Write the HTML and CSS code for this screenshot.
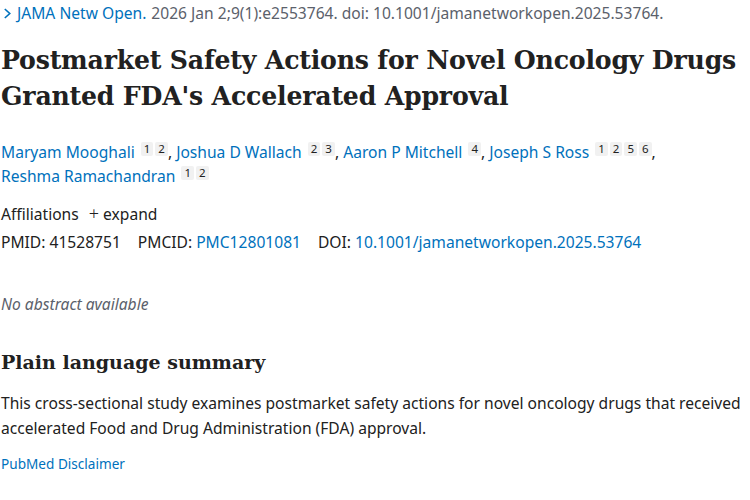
FILE: index.html
```html
<!DOCTYPE html>
<html lang="en">
<head>
<meta charset="utf-8">
<title>Postmarket Safety Actions</title>
<link rel="stylesheet" href="styles.css">
</head>
<body>
<main class="article">
  <div class="citation">
    <svg class="chev" viewBox="0 0 10 14" width="9" height="13"><path d="M2 2 L7.5 7 L2 12" fill="none" stroke="#0071bc" stroke-width="1.8"/></svg>
    <a class="link" href="#">JAMA Netw Open.</a>
    <span class="cit-rest">2026 Jan 2;9(1):e2553764. doi: 10.1001/jamanetworkopen.2025.53764.</span>
  </div>
  <h1 class="title">Postmarket Safety Actions for Novel Oncology Drugs Granted FDA's Accelerated Approval</h1>
  <div class="authors">
    <span class="author"><a class="link" href="#">Maryam Mooghali</a> <sup class="aff"><span>1</span><span>2</span></sup>,</span>
    <span class="author"><a class="link" href="#">Joshua D Wallach</a> <sup class="aff"><span>2</span><span>3</span></sup>,</span>
    <span class="author"><a class="link" href="#">Aaron P Mitchell</a> <sup class="aff"><span>4</span></sup>,</span>
    <span class="author"><a class="link" href="#">Joseph S Ross</a> <sup class="aff"><span>1</span><span>2</span><span>5</span><span>6</span></sup>,</span>
    <span class="author"><a class="link" href="#">Reshma Ramachandran</a> <sup class="aff"><span>1</span><span>2</span></sup></span>
  </div>
  <div class="affil">Affiliations <span class="expand"><span class="plus">+</span> expand</span></div>
  <div class="ids">
    <span class="id">PMID: 41528751</span>
    <span class="id">PMCID: <a class="link" href="#">PMC12801081</a></span>
    <span class="id">DOI: <a class="link" href="#">10.1001/jamanetworkopen.2025.53764</a></span>
  </div>
  <p class="noabs">No abstract available</p>
  <h2 class="sub">Plain language summary</h2>
  <p class="summary">This cross-sectional study examines postmarket safety actions for novel oncology drugs that received accelerated Food and Drug Administration (FDA) approval.</p>
  <a class="disclaimer" href="#">PubMed Disclaimer</a>
</main>
</body>
</html>
```

FILE: styles.css
```css
html, body {
  margin: 0;
  padding: 0;
  background: #ffffff;
}
body {
  font-family: "Noto Sans", "Open Sans", sans-serif;
  font-size: 15.6px;
  color: #212121;
}
.article {
  padding: 1px 0 0 1px;
}
.link {
  color: #0071bc;
  text-decoration: none;
}
.citation {
  display: flex;
  align-items: center;
  gap: 5px;
  line-height: 24px;
  color: #5b616b;
  white-space: nowrap;
}
.chev {
  flex: none;
  margin-left: 2px;
}
.title {
  font-family: "DejaVu Serif", serif;
  font-weight: bold;
  font-size: 25.2px;
  line-height: 36px;
  color: #212121;
  margin: 17px 0 0;
  letter-spacing: -0.2px;
}
.authors {
  margin-top: 26px;
  line-height: 24px;
  padding-right: 60px;
}
.author {
  white-space: nowrap;
}
.aff {
  font-size: 11.5px;
  vertical-align: 5px;
  line-height: 1;
}
.aff span {
  display: inline-block;
  background: #f1f1f1;
  color: #212121;
  padding: 1px 3px;
  margin-left: 2px;
  border-radius: 2px;
}
.affil {
  margin-top: 13px;
  line-height: 24px;
}
.expand {
  margin-left: 6px;
  color: #212121;
}
.plus {
  font-size: 18px;
  font-weight: 300;
}
.ids {
  display: flex;
  gap: 17px;
  line-height: 24px;
  margin-top: 4px;
}
.noabs {
  margin: 38px 0 0;
  font-style: italic;
  color: #5b616b;
  line-height: 24px;
}
.sub {
  font-family: "DejaVu Serif", serif;
  font-weight: bold;
  font-size: 19px;
  line-height: 30px;
  margin: 31px 0 0;
  color: #212121;
}
.summary {
  margin: 14px 0 0;
  line-height: 25px;
}
.disclaimer {
  display: block;
  margin-top: 13px;
  font-size: 13.6px;
  color: #0071bc;
  text-decoration: none;
}
```
